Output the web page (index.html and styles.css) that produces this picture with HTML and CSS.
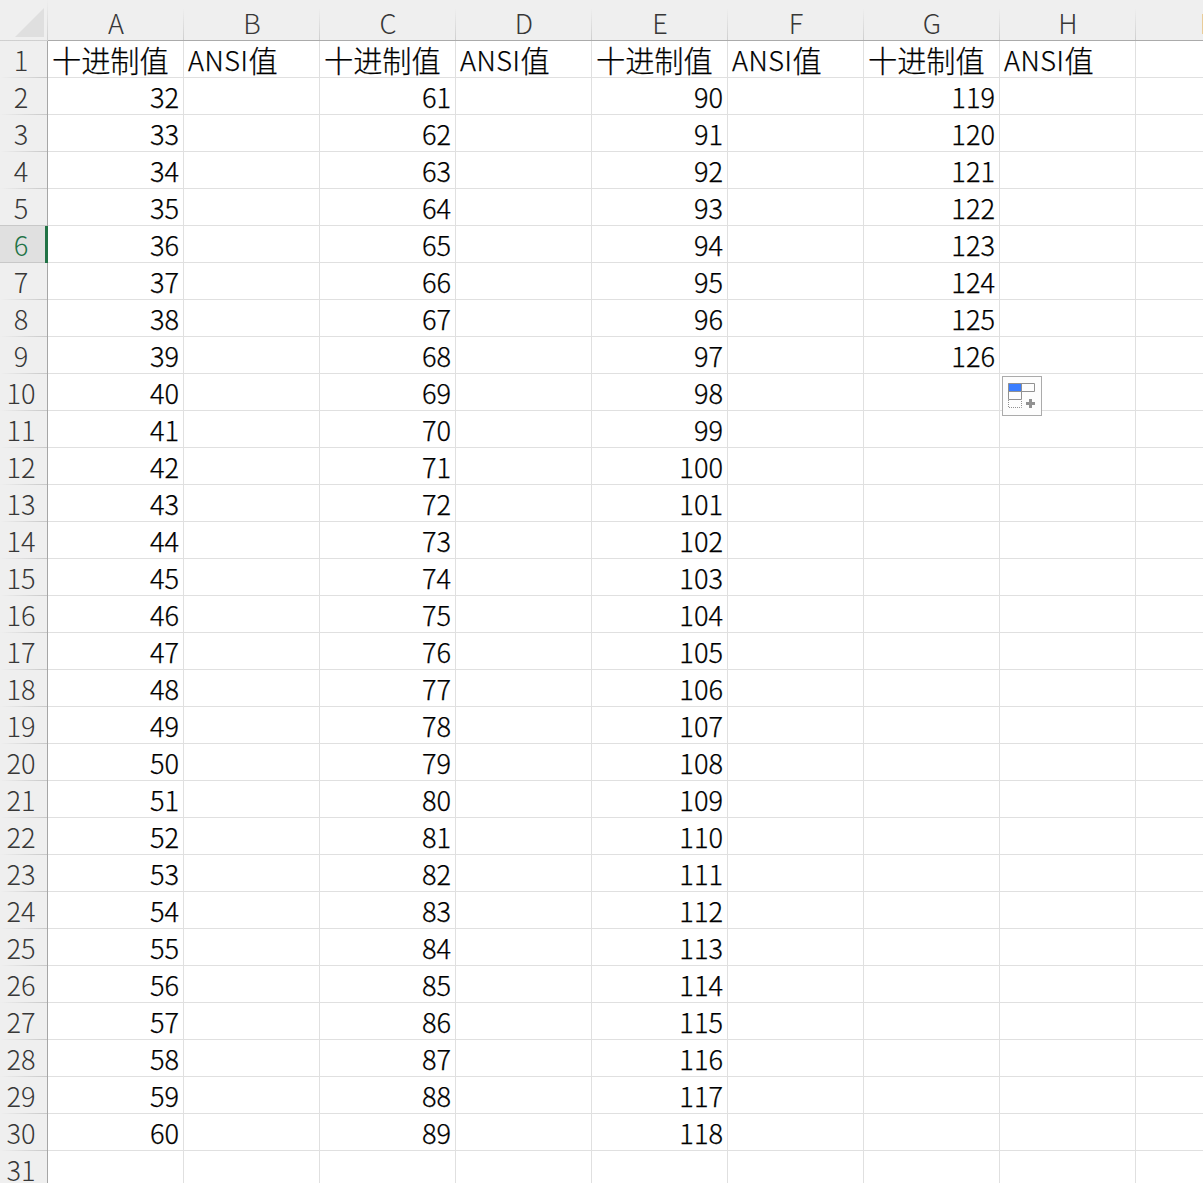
FILE: index.html
```html
<!DOCTYPE html>
<html lang="zh-CN">
<head>
<meta charset="utf-8">
<title>ANSI</title>
<link rel="stylesheet" href="styles.css">
</head>
<body>
<main class="sheet" id="sheet">
  <div class="corner"><svg width="30" height="30" viewBox="0 0 30 30"><path d="M29 0V29H0Z" fill="#dfdfdf"/></svg></div>
</main>
<div class="fill-options">
  <svg width="38" height="38" viewBox="0 0 38 38">
    <rect x="5.5" y="6.5" width="13" height="8" fill="#3a7dff"/>
    <g fill="none" stroke="#919191">
      <path d="M5.5 6.5H31.5V14.5H5.5ZM18.5 6.5V22.5H5.5V6.5"/>
      <path d="M5.5 23V30.5H18.5V23" stroke-dasharray="1 1"/>
    </g>
    <path d="M23 26.5H32M27.5 22V31" stroke="#919191" stroke-width="3"/>
  </svg>
</div>
<script src="sheet.js"></script>
</body>
</html>
```
FILE: styles.css
```css
body {
  margin: 0;
  width: 1203px;
  height: 1183px;
  overflow: hidden;
  position: relative;
  background: #fff;
  font: 300 27.2px/35px "Noto Sans CJK SC", sans-serif;
  color: #000;
}

.sheet {
  display: grid;
  grid-template-columns: 48px repeat(8, 136px) 67px;
  grid-template-rows: 41px;
  grid-auto-rows: 37px;
}

.sheet > div {
  box-sizing: border-box;
  white-space: nowrap;
}

.corner {
  background: #efefef;
  padding: 8px 0 0 15px;
  border-right: 1px solid #dadada;
  border-bottom: 1px solid #ababab;
  border-image: linear-gradient(to bottom, #efefef, #cfcfcf) 1;
}

.corner svg { display: block; }

.col-head {
  background: linear-gradient(#efefef 20%, #cfcfcf) right / 1px 100% no-repeat #efefef;
  border-bottom: 1px solid #ababab;
  padding-top: 5px;
  text-align: center;
  color: #383838;
}

.col-head:nth-child(10) {
  background: #efefef;
  padding-left: 64px;
  text-align: left;
}

.row-head {
  background: linear-gradient(to right, #efefef, #c8c8c8) bottom / 100% 1px no-repeat #efefef;
  border-right: 1px solid #a6a6a6;
  padding: 1px 5px 0 0;
  text-align: center;
  color: #383838;
}

.row-head.active {
  background: linear-gradient(#c8c8c8, #c8c8c8) bottom / 100% 1px no-repeat #e0e0e0;
  border-right: 3px solid #217346;
  padding-right: 3px;
  color: #217346;
}

.row-head.before-active {
  background-image: linear-gradient(#c8c8c8, #c8c8c8);
}

.cell {
  border-right: 1px solid #e0e0e0;
  border-bottom: 1px solid #e0e0e0;
  padding: 1px 4px 0;
  -webkit-text-stroke: 0.25px #000;
}

.cell:nth-child(10n) { border-right: 0; }

.number { text-align: right; }

.label { letter-spacing: 0.5px; }

.han {
  font-size: 29.2px;
  letter-spacing: 0;
  line-height: 30px;
  vertical-align: -1px;
}

.fill-options {
  position: absolute;
  left: 1002px;
  top: 376px;
  width: 38px;
  height: 38px;
  border: 1px solid #ababab;
  background: #fdfdfd;
}

.fill-options svg { display: block; }
```
FILE: sheet.js
```js
const sheet = document.getElementById('sheet');
const firstCodes = [32, 61, 90, 119];

function add(className, html) {
  const el = document.createElement('div');
  el.className = className;
  el.innerHTML = html;
  sheet.appendChild(el);
}

for (const letter of 'ABCDEFGHI') add('col-head', letter);

for (let row = 1; row <= 31; row++) {
  add(row === 6 ? 'row-head active' : row === 5 ? 'row-head before-active' : 'row-head', row);
  for (let col = 0; col < 9; col++) {
    if (row === 1 && col < 8) {
      add('cell label', col % 2 ? 'ANSI<span class="han">值</span>' : '<span class="han">十进制值</span>');
      continue;
    }
    const code = firstCodes[col / 2] + row - 2;
    const filled = col % 2 === 0 && col < 8 && row <= 30 && code <= 126;
    add('cell number', filled ? code : '');
  }
}
```
